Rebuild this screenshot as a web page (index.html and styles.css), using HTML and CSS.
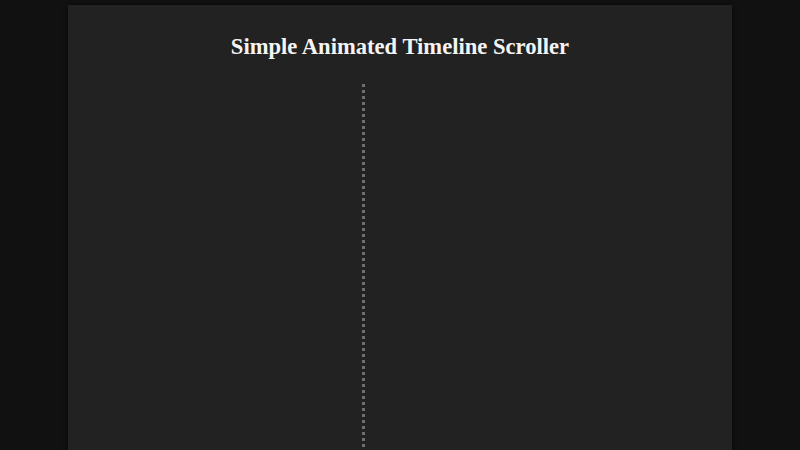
FILE: index.html
```html
<!DOCTYPE html>
<html lang="en">
<head>
<meta charset="utf-8">
<title>Simple Animated Timeline Scroller</title>
<link rel="stylesheet" href="styles.css">
</head>
<body>
<div class="wrapper">
  <h1 class="title">Simple Animated Timeline Scroller</h1>
  <div class="timeline"></div>
</div>
</body>
</html>
```
FILE: styles.css
```css
html, body {
  margin: 0;
  padding: 0;
  background: #111111;
  height: 100%;
  overflow: hidden;
}

.wrapper {
  width: 664px;
  margin: 5px auto 0;
  background: #222222;
  min-height: 600px;
  box-shadow: 0 0 4px rgba(0, 0, 0, 0.6);
  padding-top: 1px;
}

.title {
  font-family: "Liberation Serif", "Times New Roman", serif;
  font-weight: bold;
  font-size: 22.6px;
  color: #f4f4f4;
  text-align: center;
  margin: 27px 0 0;
  line-height: 28px;
}

/* vertical track of square dots */
.timeline {
  margin: 23px 0 0 294px;
  width: 3px;
  height: 600px;
  background: repeating-linear-gradient(to bottom, #6f6f6f 0 3px, transparent 3px 6px);
}
```
